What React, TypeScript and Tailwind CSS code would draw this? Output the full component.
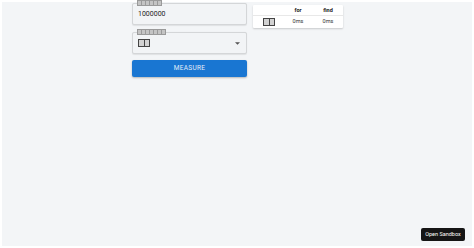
import React from 'react';

// missing-glyph boxes, as the reference shows them
function Tofu({ count, dark = false }: { count: number; dark?: boolean }) {
  return (
    <div className="flex gap-[1px]" aria-hidden>
      {Array.from({ length: count }).map((_, i) => (
        <div
          key={i}
          className={
            dark
              ? 'w-[4.5px] h-[6px] shrink-0 bg-[#d2d2d2] outline outline-1 outline-[#444]'
              : 'w-[3px] h-[4px] shrink-0 bg-[#c4c4c4] outline outline-1 outline-[#9a9a9a]'
          }
        />
      ))}
    </div>
  );
}

export default function App() {
  return (
    <div className="w-[474px] h-[248px] bg-white p-[2px] font-['Roboto','Liberation_Sans',sans-serif]">
      <div className="relative w-full h-full bg-[#f3f5f7]">
        <div className="flex gap-[6px] pl-[130px] pt-[1px]">
          <div className="flex flex-col w-[115px]">
            {/* number input */}
            <div className="relative h-[22px] border border-[#d4d6d8] rounded-[2px] bg-[#f2f4f6] shadow-[0_0.5px_1px_rgba(0,0,0,0.08)]">
              <div className="absolute left-[4px] top-[-3px] px-[1px] bg-[#f3f5f7]">
                <Tofu count={6} />
              </div>
              <div className="flex items-center h-[20px] pl-[5px] text-[7px] leading-[8px] text-[#222]">1000000</div>
            </div>
            {/* select */}
            <div className="relative h-[22px] mt-[7px] border border-[#d4d6d8] rounded-[2px] bg-[#f2f4f6] shadow-[0_0.5px_1px_rgba(0,0,0,0.08)]">
              <div className="absolute left-[4px] top-[-3px] px-[1px] bg-[#f3f5f7]">
                <Tofu count={7} />
              </div>
              <div className="flex items-center justify-between h-[20px] pl-[6px] pr-[6px]">
                <Tofu count={2} dark />
                <svg width="5" height="3" viewBox="0 0 10 5">
                  <path d="M0 0l5 5 5-5z" fill="#555" />
                </svg>
              </div>
            </div>
            <button className="mt-[6px] h-[17px] rounded-[2px] bg-[#1976d2] text-[#e3edf8] text-[6.5px] font-normal tracking-[0.3px] shadow-[0_1px_2px_rgba(0,0,0,0.25)]">
              MEASURE
            </button>
          </div>

          <div className="mt-[2px] h-[23px] w-[90px] bg-white shadow-[0_1px_2px_rgba(0,0,0,0.18)] rounded-[1px] text-[5.5px] text-[#333]">
            <div className="grid grid-cols-[30px_1fr_1fr] items-center h-[11px] border-b border-[#e8e8e8] font-bold text-[#222]">
              <div />
              <div className="text-center">for</div>
              <div className="text-center">find</div>
            </div>
            <div className="grid grid-cols-[30px_1fr_1fr] items-center h-[11px]">
              <div className="flex justify-center pl-[2px]">
                <Tofu count={2} dark />
              </div>
              <div className="text-center">0ms</div>
              <div className="text-center">0ms</div>
            </div>
          </div>
        </div>

        <button className="absolute right-[7px] bottom-[5px] w-[44px] h-[13px] rounded-[2px] bg-[#151515] text-white text-[5.5px] leading-none">
          Open Sandbox
        </button>
      </div>
    </div>
  );
}
